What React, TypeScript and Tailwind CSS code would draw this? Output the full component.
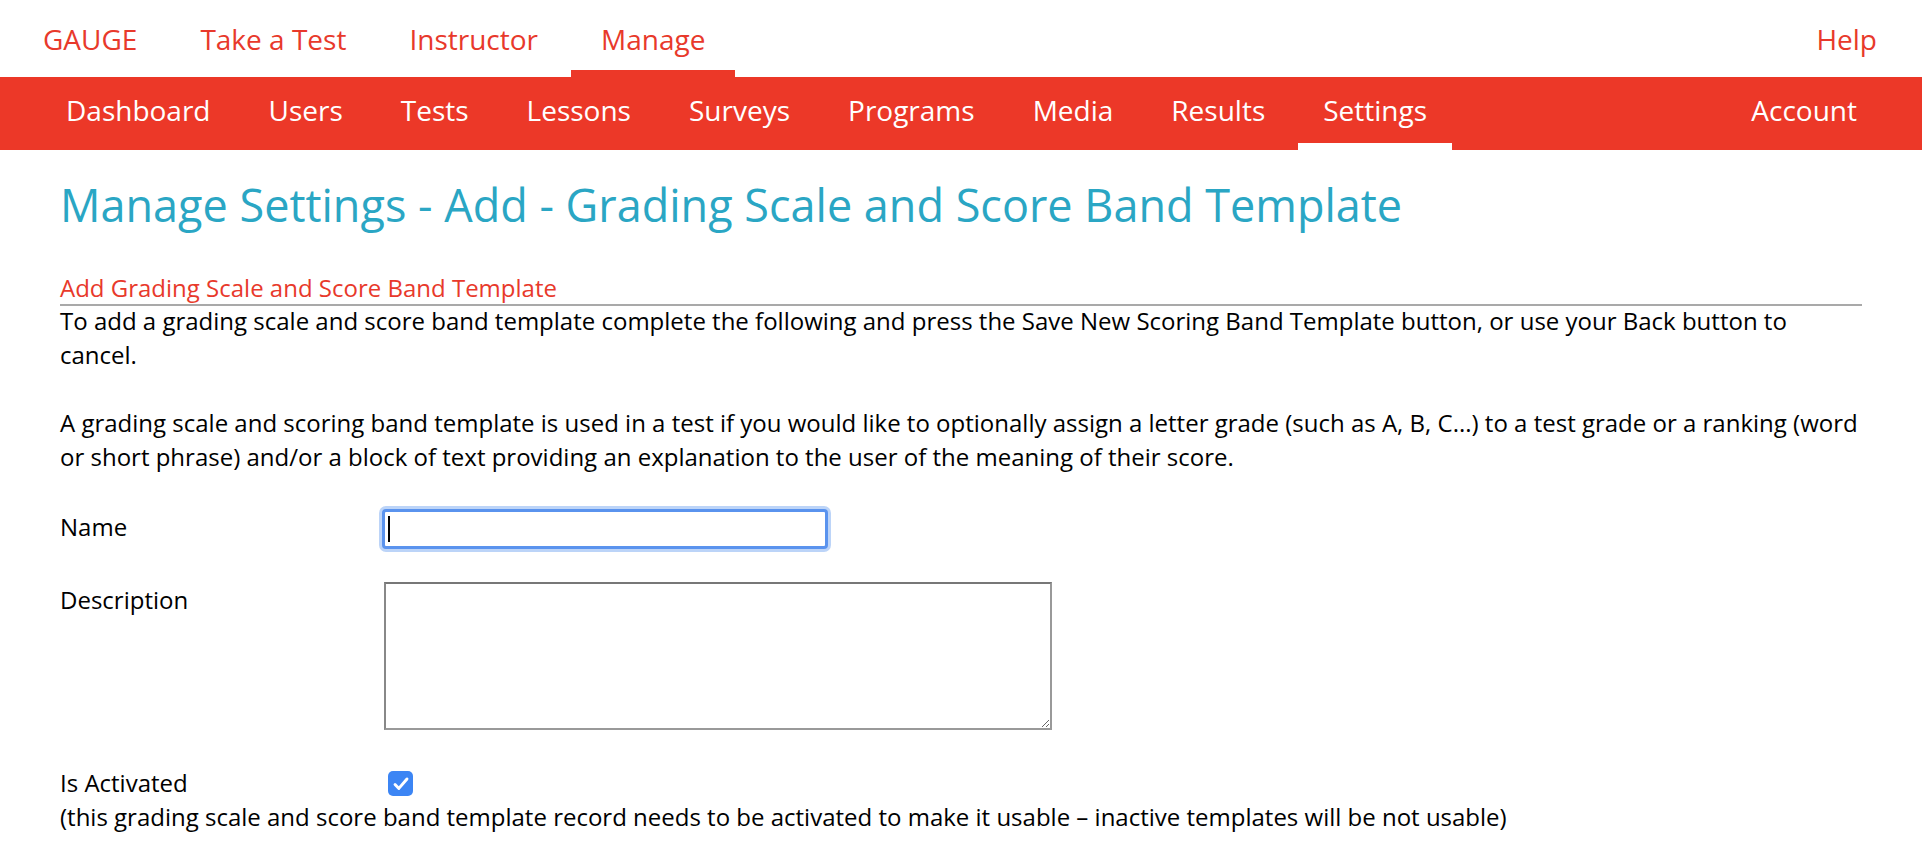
const topLinks = ["GAUGE", "Take a Test", "Instructor", "Manage"];
const subLinks = ["Dashboard", "Users", "Tests", "Lessons", "Surveys", "Programs", "Media", "Results", "Settings"];

export default function App() {
  return (
    <div className="min-h-[860px] bg-white text-black" style={{ fontFamily: '"Open Sans", "Noto Sans", sans-serif' }}>
      {/* top nav */}
      <header className="flex items-start justify-between pl-[13px] pr-[15px] text-[28px] leading-[38px] text-[#e8392b]">
        <nav className="flex gap-[3px]">
          {topLinks.map((l) => (
            <a
              key={l}
              href="#"
              className={`px-[30px] pt-[20px] pb-[12px] border-b-[7px] ${l === "Manage" ? "border-[#ec3828]" : "border-transparent"}`}
            >
              {l}
            </a>
          ))}
        </nav>
        <a href="#" className="px-[30px] pt-[20px] pb-[12px]">Help</a>
      </header>

      {/* sub nav */}
      <div className="flex justify-between bg-[#ec3828] pl-[41px] pr-[40px] text-[28px] leading-[38px] text-white">
        <nav className="flex gap-[8px]">
          {subLinks.map((l) => (
            <a
              key={l}
              href="#"
              className={`px-[25px] pt-[14px] pb-[14px] border-b-[7px] ${l === "Settings" ? "border-white" : "border-transparent"}`}
            >
              {l}
            </a>
          ))}
        </nav>
        <a href="#" className="px-[25px] pt-[14px] pb-[14px] border-b-[7px] border-transparent">Account</a>
      </div>

      <main className="px-[60px] pt-[28px]">
        <h1 className="text-[45px] leading-[54px] text-[#2aa6c4]">
          Manage Settings - Add - Grading Scale and Score Band Template
        </h1>

        <h2 className="mt-[39px] border-b-2 border-[#a9a9a9] text-[24px] leading-[33px] text-[#e8392b]">
          Add Grading Scale and Score Band Template
        </h2>

        <div className="-mt-[2px] text-[24px] leading-[34px]">
          <p>
            To add a grading scale and score band template complete the following and press the Save New Scoring Band
            Template button, or use your Back button to cancel.
          </p>
          <p className="mt-[34px]">
            A grading scale and scoring band template is used in a test if you would like to optionally assign a letter
            grade (such as A, B, C...) to a test grade or a ranking (word or short phrase) and/or a block of text providing
            an explanation to the user of the meaning of their score.
          </p>

          <div className="mt-[36px] flex">
            <label className="w-[324px]">Name</label>
            <div className="-mt-px ml-[-2px] flex h-[40px] w-[446px] items-center rounded-[4px] border-[3px] border-[#5a93ee] bg-white shadow-[0_0_0_3px_#bcd4f8]">
              <span className="ml-[3px] h-[26px] w-[2px] bg-black" />
            </div>
          </div>

          <div className="mt-[34px] flex">
            <label className="w-[324px]">Description</label>
            <textarea className="-mt-px h-[148px] w-[668px] border-2 border-[#999] border-t-[#777] border-l-[#888] bg-white outline-none" />
          </div>

          <div className="mt-[36px] flex">
            <label className="w-[328px]">Is Activated</label>
            <span className="mt-[5px] flex h-[25px] w-[25px] items-center justify-center rounded-[5px] bg-[#3c85f4]">
              <svg viewBox="0 0 24 24" className="h-[22px] w-[22px]" fill="none" stroke="white" strokeWidth="3.2" strokeLinecap="round" strokeLinejoin="round">
                <path d="M5.5 12.5l4.2 4.3L18.5 6.5" />
              </svg>
            </span>
          </div>
          <p>
            (this grading scale and score band template record needs to be activated to make it usable – inactive templates
            will be not usable)
          </p>
        </div>
      </main>
    </div>
  );
}
